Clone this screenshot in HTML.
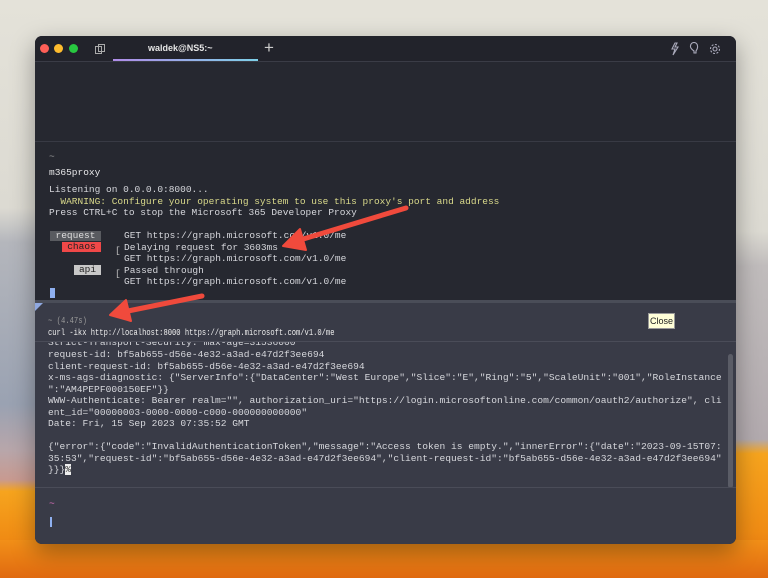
<!DOCTYPE html>
<html><head><meta charset="utf-8"><style>
*{margin:0;padding:0;box-sizing:border-box}
body{width:768px;height:578px;overflow:hidden;position:relative;font-family:"Liberation Mono",monospace;background:#e4e2d9}
.bgm{position:absolute;left:0;top:0}
.win{position:absolute;left:35px;top:36px;width:701px;height:508px;border-radius:7px;background:#262830;overflow:hidden;box-shadow:0 8px 24px rgba(0,0,0,.35)}
.bar{position:absolute;left:0;top:0;width:701px;height:26px;background:#22232b;border-bottom:1px solid #3a3c46}
.dot{position:absolute;top:8px;width:9px;height:9px;border-radius:50%}
.t{position:absolute;white-space:pre;color:#d6d7dc}
.top{font-size:9.5px;line-height:11.5px}
.bot{font-size:9.6px;line-height:11.5px}
.badge{position:absolute;height:10px;font-size:9.5px;line-height:10px;text-align:center;color:#222}
</style></head><body>
<svg class="bgm" width="768" height="578">
<defs>
<linearGradient id="gl" x1="0" y1="0" x2="0" y2="1">
<stop offset="0" stop-color="#e4e2d9"/><stop offset="0.36" stop-color="#dcdad2"/><stop offset="0.42" stop-color="#b4b6bc"/><stop offset="0.7" stop-color="#9aa2b2"/><stop offset="0.78" stop-color="#b8a6aa"/><stop offset="0.83" stop-color="#c89a90"/><stop offset="0.85" stop-color="#f6a41e"/><stop offset="0.93" stop-color="#f08c14"/><stop offset="1" stop-color="#e06c10"/>
</linearGradient>
<linearGradient id="gr" x1="0" y1="0" x2="0" y2="1">
<stop offset="0" stop-color="#e4e2d9"/><stop offset="0.4" stop-color="#dcdad2"/><stop offset="0.46" stop-color="#c0bcbc"/><stop offset="0.76" stop-color="#b2aaae"/><stop offset="0.785" stop-color="#f6a41e"/><stop offset="0.92" stop-color="#f08c14"/><stop offset="1" stop-color="#e06c10"/>
</linearGradient>
<linearGradient id="gb" x1="0" y1="0" x2="0" y2="1">
<stop offset="0" stop-color="#f29018"/><stop offset="1" stop-color="#e06a10"/>
</linearGradient>
</defs>
<rect x="0" y="0" width="40" height="578" fill="url(#gl)"/>
<rect x="730" y="0" width="38" height="578" fill="url(#gr)"/>
<rect x="0" y="540" width="768" height="38" fill="url(#gb)"/>
</svg>
<div class="win">
 <div class="bar">
  <div class="dot" style="left:5px;background:#fe5f57"></div>
  <div class="dot" style="left:19px;background:#febc2e"></div>
  <div class="dot" style="left:34px;background:#28c840"></div>
  <svg style="position:absolute;left:59px;top:7px" width="12" height="12"><rect x="1.5" y="3.5" width="6" height="7" fill="none" stroke="#aaa" stroke-width="1"/><rect x="4.5" y="1.5" width="6" height="7" fill="none" stroke="#aaa" stroke-width="1"/></svg>
  <div style="position:absolute;left:113px;top:7px;font:bold 9px 'Liberation Sans',sans-serif;color:#e6e6e6">waldek@NS5:~</div>
  <div style="position:absolute;left:78px;top:23px;width:145px;height:2px;background:linear-gradient(90deg,#b08ce8,#7ed0e8)"></div>
  <div style="position:absolute;left:229px;top:2px;font:17px 'Liberation Sans',sans-serif;color:#ccc">+</div>
  <svg style="position:absolute;left:635px;top:6px" width="60" height="14" fill="none" stroke="#aab" stroke-width="1.1">
   <path d="M5 1 L2 7 L5 7 L3 13 L8 5 L5 5 L7 1Z"/>
   <path d="M24 9 Q20 6 20.5 4 A3.5 3.5 0 0 1 27.5 4 Q28 6 26 9 L26 11 L24 11Z"/>
   <circle cx="45" cy="7" r="2"/><circle cx="45" cy="7" r="4.5" stroke-dasharray="2 1.5"/>
  </svg>
 </div>
 <div style="position:absolute;left:0;top:105px;width:701px;height:1px;background:#383a44"></div>
 <div class="t top" style="left:14px;top:115px;color:#999">~</div>
 <div class="t top" style="left:14px;top:131px;color:#e8e8ea">m365proxy</div>
 <div class="t top" style="left:14px;top:148px">Listening on 0.0.0.0:8000...
<span style="color:#d8d88a">  WARNING: Configure your operating system to use this proxy's port and address</span>
Press CTRL+C to stop the Microsoft 365 Developer Proxy</div>
 <div class="badge" style="left:15px;top:195px;width:51px;background:#595b60;color:#ddd">request</div>
 <div class="badge" style="left:27px;top:206px;width:39px;background:#f04848;color:#222">chaos</div>
 <div class="badge" style="left:39px;top:229px;width:27px;background:#c8c8c8">api</div>
 <div class="t top" style="left:80px;top:209px;color:#bbb">[</div>
 <div class="t top" style="left:80px;top:232px;color:#bbb">[</div>
 <div class="t top" style="left:89px;top:194px">GET https://graph.microsoft.com/v1.0/me
Delaying request for 3603ms
GET https://graph.microsoft.com/v1.0/me
Passed through
GET https://graph.microsoft.com/v1.0/me</div>
 <div style="position:absolute;left:15px;top:252px;width:5px;height:10px;background:#8fb0f0"></div>
 <div style="position:absolute;left:0;top:264px;width:701px;height:3px;background:#4a4d58"></div>
 <div style="position:absolute;left:0;top:267px;width:701px;height:241px;background:#393b47"></div>
 <svg style="position:absolute;left:0;top:267px" width="8" height="8"><path d="M0 0 L8 0 L0 8Z" fill="#8fa8e0"/></svg>
 <div class="t" style="left:13px;top:280px;font-size:9px;transform:scaleX(0.8);transform-origin:0 0;color:#999">~ (4.47s)</div>
 <div class="t" style="left:13px;top:291px;font-size:9.5px;transform:scaleX(0.75);transform-origin:0 0;color:#eee">curl -ikx http://localhost:8000 https://graph.microsoft.com/v1.0/me</div>
 <div style="position:absolute;left:0;top:305px;width:701px;height:1px;background:#4a4c58"></div>
 <div class="t bot" style="left:13px;top:301px;height:0;overflow:visible;clip-path:inset(5px 0 -500px 0)">Strict-Transport-Security: max-age=31536000</div>
 <div class="t bot" style="left:13px;top:313px">request-id: bf5ab655-d56e-4e32-a3ad-e47d2f3ee694
client-request-id: bf5ab655-d56e-4e32-a3ad-e47d2f3ee694
x-ms-ags-diagnostic: {"ServerInfo":{"DataCenter":"West Europe","Slice":"E","Ring":"5","ScaleUnit":"001","RoleInstance
":"AM4PEPF000150EF"}}
WWW-Authenticate: Bearer realm="", authorization_uri="https://login.microsoftonline.com/common/oauth2/authorize", cli
ent_id="00000003-0000-0000-c000-000000000000"
Date: Fri, 15 Sep 2023 07:35:52 GMT

{"error":{"code":"InvalidAuthenticationToken","message":"Access token is empty.","innerError":{"date":"2023-09-15T07:
35:53","request-id":"bf5ab655-d56e-4e32-a3ad-e47d2f3ee694","client-request-id":"bf5ab655-d56e-4e32-a3ad-e47d2f3ee694"
}}}<span style="background:#eee;color:#333">%</span></div>
 <div style="position:absolute;left:693px;top:318px;width:5px;height:134px;border-radius:3px;background:#5a5c66"></div>
 <div style="position:absolute;left:0;top:451px;width:701px;height:1px;background:#4a4c58"></div>
 <div class="t bot" style="left:14px;top:462px;color:#e070c0">~</div>
 <div style="position:absolute;left:15px;top:481px;width:1.5px;height:10px;background:#8fb0f0"></div>
 <div style="position:absolute;left:613px;top:277px;width:27px;height:16px;background:#ffffd8;border:1px solid #999;font:9px 'Liberation Sans',sans-serif;line-height:14px;text-align:center;color:#222">Close</div>
</div>
<svg style="position:absolute;left:0;top:0" width="768" height="578">
 <g stroke="#f04a3c" stroke-width="5" stroke-linecap="round" fill="#f04a3c">
  <line x1="406" y1="208" x2="300" y2="240"/>
  <path d="M283 246 L300 229 L306 250Z" stroke-width="2" stroke-linejoin="round"/>
  <line x1="202" y1="296" x2="128" y2="311"/>
  <path d="M110 315 L126 300 L131 321Z" stroke-width="2" stroke-linejoin="round"/>
 </g>
</svg>
</body></html>
